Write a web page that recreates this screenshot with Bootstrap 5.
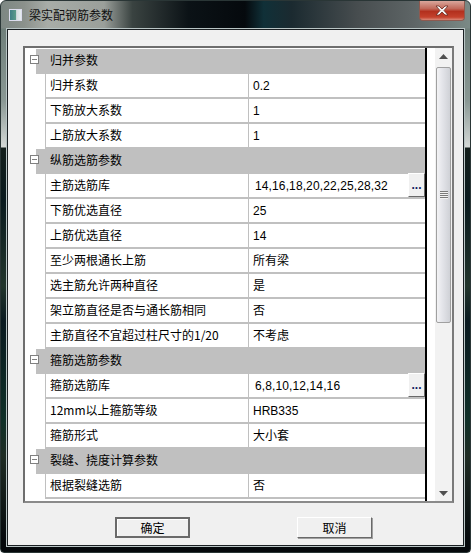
<!DOCTYPE html>
<html lang="zh">
<head>
<meta charset="utf-8">
<title>梁实配钢筋参数</title>
<link href="https://cdn.jsdelivr.net/npm/bootstrap@5.3.0/dist/css/bootstrap.min.css" rel="stylesheet">
<style>
html,body{margin:0;height:553px;background:#fff;overflow:hidden}
body{font-family:"Noto Sans CJK SC","Liberation Sans",sans-serif;font-size:12px;color:#000}
.glass{width:471px;height:553px;border-radius:6px 6px 4px 4px;border:1px solid #2a3636;padding:0 6px 6px;
 background:linear-gradient(180deg,transparent 0,transparent 27px,#6f7f7a 28px,#8a9894 100px,#d4d8d6 146px,#141f1c 147px,#0a1a1e 200px,#22352c 285px,#0a1a20 320px,#103028 420px,#1f2c24 455px,#05090c 540px,#05090c 100%),
 linear-gradient(90deg,#7d8783 0,#8b918c 5%,#a8ada8 10%,#9a9f9a 22%,#3a4341 28%,#0b1216 40%,#05090d 52%,#103038 56%,#1b2a30 62%,#474d4f 76%,#5e6566 88%,#7b8a86 100%)}
.tbar{height:28px;position:relative;padding-left:2px;gap:7px}
.tico{width:13px;height:12px;background:linear-gradient(90deg,#3f7f86 0,#5a9a8a 50%,#d5dde0 60%,#e8eef0 100%);border:1px solid #dde;flex:none}
.ttl{color:#101010;line-height:16px}
.xbtn{position:absolute;right:-1px;top:0;width:46px;height:20px;border:1px solid #8d5a50;border-top:0;border-radius:0 0 4px 4px;
 background:linear-gradient(180deg,#d9a79c 0,#c0695a 40%,#b3301e 55%,#c4412c 85%,#d98a7a 100%);
 display:flex;align-items:center;justify-content:center}
.client{height:517px;background:#f0f0f0;border:1px solid #1a1f22;box-shadow:0 0 0 1px #b8c4c4;padding:16px 9px 0 15px}
.pane{height:457px;background:#fff;border:2px solid #6e6e6e;border-right-color:#7a7a7a;border-bottom-color:#8a8a8a;overflow:hidden}
.gridwrap{width:402px;height:453px;border-right:2px solid #000;overflow:hidden;padding-top:1px;flex:none}
.sect{height:25px;margin-left:11px;background:#c0c0c0;padding-left:14px;line-height:22px;position:relative;border-bottom:1px solid #c0c0c0}
.sect::before{content:"";position:absolute;left:-6px;top:6px;width:9px;height:9px;border:1px solid #808080;background:linear-gradient(#808080,#808080) center/5px 1px no-repeat #fff}
.rw{height:25px;margin-left:20px;border-left:1px solid #c0c0c0;border-bottom:2px solid #c0c0c0}
.lab{width:203px;padding-left:4px;border-right:1px solid #c0c0c0;flex:none;white-space:nowrap;overflow:hidden;height:23px;line-height:21px}
.val{padding-left:4px;font-family:"Liberation Sans","Noto Sans CJK SC",sans-serif;flex:1 1 auto;height:23px;line-height:25px;position:relative}
.val.lib{padding-left:6px;letter-spacing:.12px}
.ell{position:absolute;right:0;top:-1px;width:17px;height:24px;background:#f0f0f0;border:1px solid;border-color:#fff #696969 #696969 #fff;font-size:12px;font-weight:700;line-height:23px;text-align:center;color:#102060;letter-spacing:0;padding:0}
.sbar{flex:1 1 auto;background:#f2f2f2;position:relative;border-left:8px solid #fff}
.arr{height:16px;display:flex;align-items:center;justify-content:center}
.thumb{height:256px;margin:3px 1px 0 1px;border:1px solid #a0a0a0;border-radius:2px;background:linear-gradient(90deg,#f3f3f5 0,#e4e5ea 40%,#cfd1d6 100%);display:flex;align-items:center;justify-content:center}
.grip{width:8px;height:8px;background:repeating-linear-gradient(180deg,#7a7a7a 0 1px,#f2f2f2 1px 2px)}
.foot{padding-top:14px;padding-left:92px;gap:107px}
.dbtn{width:75px;height:21px;border-radius:0;background:#f0f0f0;font-size:12px;line-height:15px;padding:0;color:#000}
.dbtn.dflt{border:2px solid #6a6a6a;box-shadow:inset 1px 1px 0 #fff}
.dbtn.plain{border:1px solid;border-color:#fff #696969 #696969 #fff;box-shadow:1px 1px 0 #a0a0a0}
</style>
</head>
<body>
<div class="glass d-flex flex-column">
  <div class="tbar d-flex align-items-center">
    <span class="tico"></span><span class="ttl">梁实配钢筋参数</span>
    <span class="xbtn"><svg width="16" height="11" viewBox="0 0 16 11"><path d="M2 1 L5 1 L8 4 L11 1 L14 1 L10 5.5 L14 10 L11 10 L8 7 L5 10 L2 10 L6 5.5Z" fill="#f4f4f4" stroke="#6b2a20" stroke-width=".8"/></svg></span>
  </div>
  <div class="client">
    <div class="pane d-flex">
      <div class="gridwrap">
        <div class="sect">归并参数</div>
        <div class="rw d-flex"><div class="lab">归并系数</div><div class="val">0.2</div></div>
        <div class="rw d-flex"><div class="lab">下筋放大系数</div><div class="val">1</div></div>
        <div class="rw d-flex"><div class="lab">上筋放大系数</div><div class="val">1</div></div>
        <div class="sect">纵筋选筋参数</div>
        <div class="rw d-flex"><div class="lab">主筋选筋库</div><div class="val lib">14,16,18,20,22,25,28,32<span class="ell">...</span></div></div>
        <div class="rw d-flex"><div class="lab">下筋优选直径</div><div class="val">25</div></div>
        <div class="rw d-flex"><div class="lab">上筋优选直径</div><div class="val">14</div></div>
        <div class="rw d-flex"><div class="lab">至少两根通长上筋</div><div class="val">所有梁</div></div>
        <div class="rw d-flex"><div class="lab">选主筋允许两种直径</div><div class="val">是</div></div>
        <div class="rw d-flex"><div class="lab">架立筋直径是否与通长筋相同</div><div class="val">否</div></div>
        <div class="rw d-flex"><div class="lab">主筋直径不宜超过柱尺寸的1/20</div><div class="val">不考虑</div></div>
        <div class="sect">箍筋选筋参数</div>
        <div class="rw d-flex"><div class="lab">箍筋选筋库</div><div class="val lib">6,8,10,12,14,16<span class="ell">...</span></div></div>
        <div class="rw d-flex"><div class="lab">12mm以上箍筋等级</div><div class="val">HRB335</div></div>
        <div class="rw d-flex"><div class="lab">箍筋形式</div><div class="val">大小套</div></div>
        <div class="sect">裂缝、挠度计算参数</div>
        <div class="rw d-flex"><div class="lab">根据裂缝选筋</div><div class="val">否</div></div>
      </div>
      <div class="sbar d-flex flex-column">
        <div class="arr"><svg width="9" height="5" viewBox="0 0 9 5"><path d="M4.5 0 L9 5 L0 5Z" fill="#505050"/></svg></div>
        <div class="thumb"><span class="grip"></span></div>
        <div class="flex-grow-1"></div>
        <div class="arr"><svg width="9" height="5" viewBox="0 0 9 5"><path d="M0 0 L9 0 L4.5 5Z" fill="#505050"/></svg></div>
      </div>
    </div>
    <div class="foot d-flex">
      <button type="button" class="btn dbtn dflt">确定</button>
      <button type="button" class="btn dbtn plain">取消</button>
    </div>
  </div>
</div>
<script src="https://cdn.jsdelivr.net/npm/bootstrap@5.3.0/dist/js/bootstrap.bundle.min.js"></script>
</body>
</html>
